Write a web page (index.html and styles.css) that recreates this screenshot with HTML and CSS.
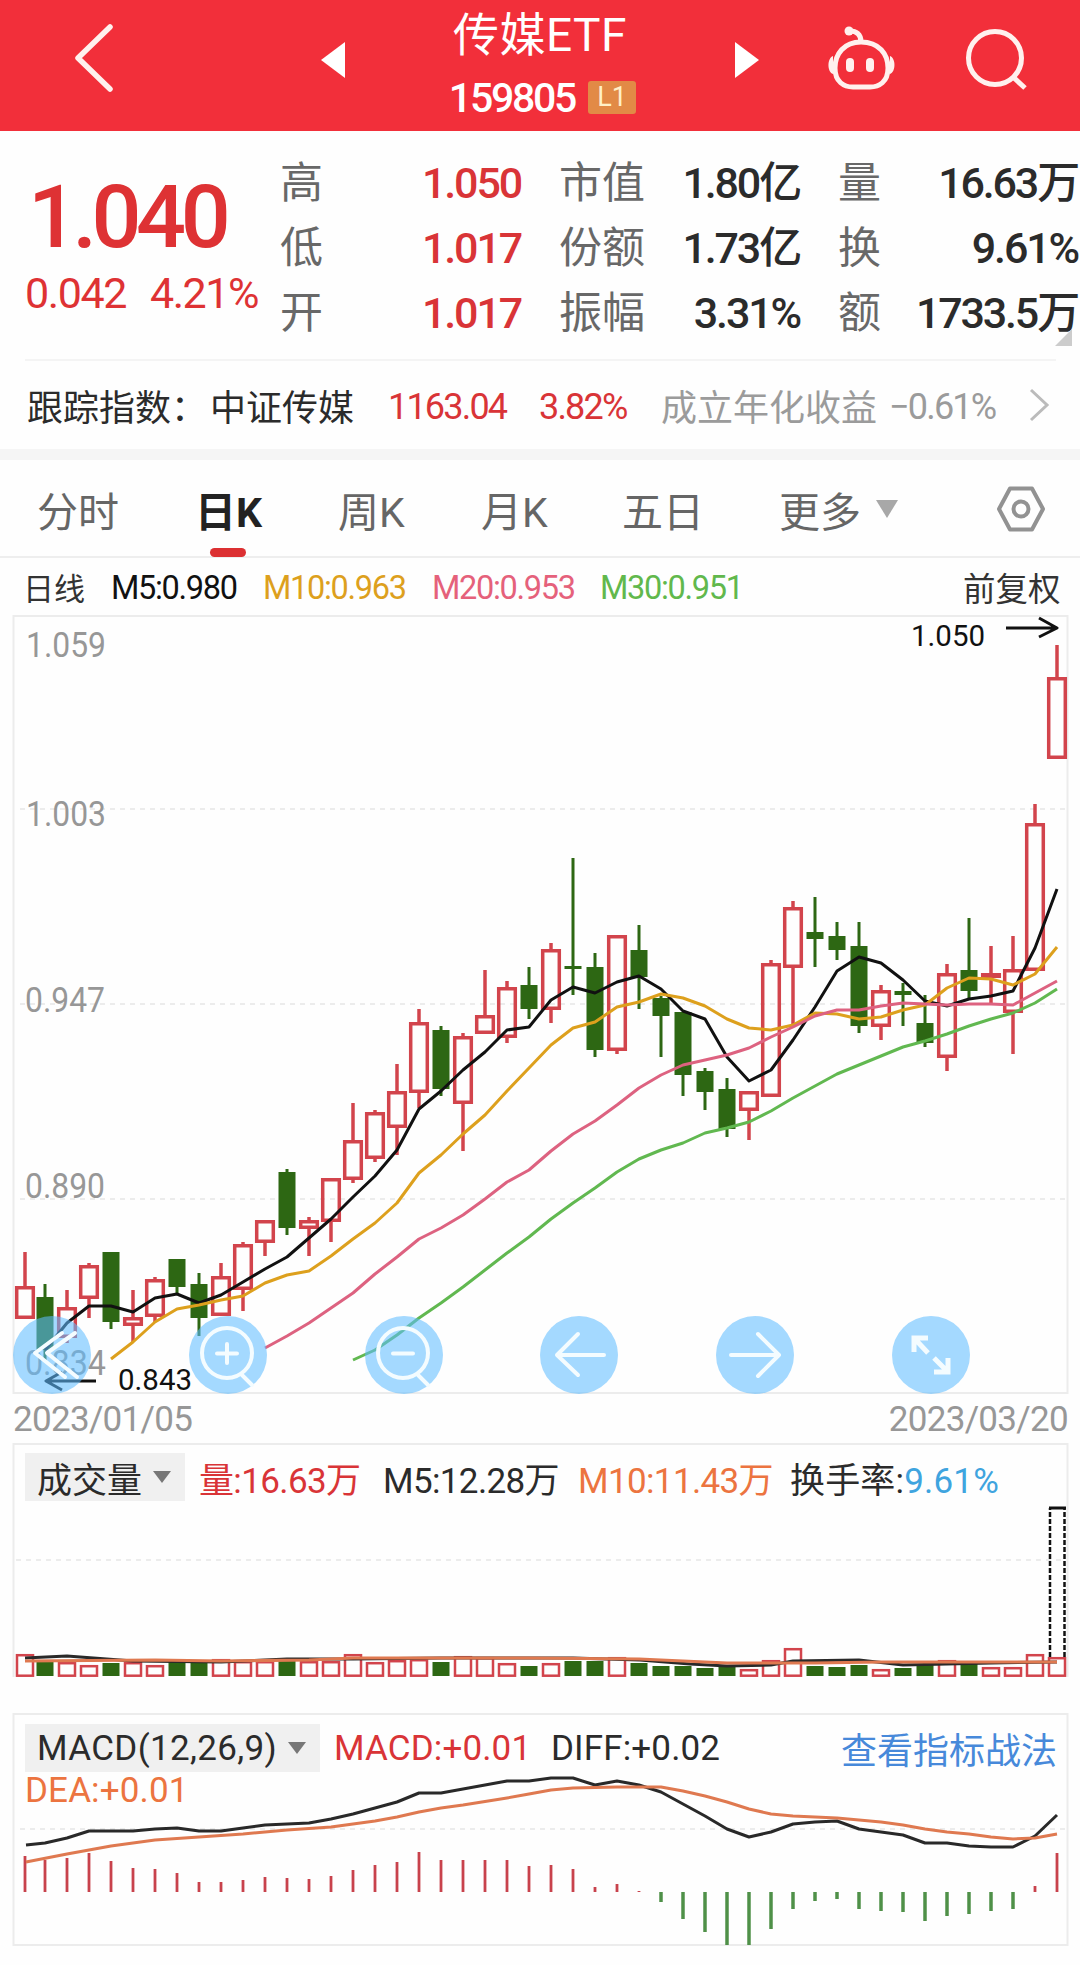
FILE: index.html
```html
<!DOCTYPE html>
<html lang="zh-CN">
<head>
<meta charset="utf-8">
<title>传媒ETF 159805</title>
<link rel="stylesheet" href="styles.css">
</head>
<body>
<header class="topbar">
  <svg class="back" viewBox="0 0 50 70"><path d="M40 4 8 35 40 66"/></svg>
  <svg class="tri prev" viewBox="0 0 24 36"><path d="M0 18 24 0V36Z"/></svg>
  <div class="title">
    <h1>传媒ETF</h1>
    <div class="code"><span class="num">159805</span><span class="badge">L1</span></div>
  </div>
  <svg class="tri next" viewBox="0 0 24 36"><path d="M24 18 0 0V36Z"/></svg>
  <svg class="robot" viewBox="0 0 72 66">
    <path class="line" d="M36 16C54 16 63 28 63 42C63 56 54 61 45 61H28C19 61 10 56 10 42C10 28 19 16 36 16ZM36 16C36 8 31 5 25 5"/>
    <circle cx="24" cy="5" r="4.5"/><rect x="21" y="32" width="8" height="14" rx="4"/><rect x="41" y="32" width="8" height="14" rx="4"/>
    <path d="M8 30C2 32 2 46 8 48ZM65 30C71 32 71 46 65 48Z"/>
  </svg>
  <svg class="search" viewBox="0 0 64 64"><circle cx="30" cy="30" r="26.5"/><path d="M48 49 60 60"/></svg>
</header>

<section class="quote">
  <div class="price">
    <strong>1.040</strong>
    <div class="change"><span>0.042</span><span>4.21%</span></div>
  </div>
  <dl class="stats">
    <dt>高</dt><dd class="up">1.050</dd><dt>市值</dt><dd>1.80亿</dd><dt>量</dt><dd>16.63万</dd>
    <dt>低</dt><dd class="up">1.017</dd><dt>份额</dt><dd>1.73亿</dd><dt>换</dt><dd>9.61%</dd>
    <dt>开</dt><dd class="up">1.017</dd><dt>振幅</dt><dd>3.31%</dd><dt>额</dt><dd>1733.5万</dd>
  </dl>
  <i class="corner"></i>
</section>

<section class="index">
  <span>跟踪指数：</span><span>中证传媒</span><span class="up num">1163.04</span><span class="up num">3.82%</span>
  <span class="muted">成立年化收益</span><span class="muted num">−0.61%</span>
  <svg viewBox="0 0 20 34"><path d="M2 2 18 17 2 32"/></svg>
</section>

<nav class="tabs">
  <a>分时</a><a class="active">日K</a><a>周K</a><a>月K</a><a>五日</a><a>更多<i class="caret"></i></a>
  <svg viewBox="0 0 50 46"><path d="M14 2.5H36L47 23 36 43.5H14L3 23Z"/><circle cx="25" cy="23" r="7.5"/></svg>
</nav>

<div class="averages">
  <span>日线</span><span class="num m5">M5:0.980</span><span class="num m10">M10:0.963</span><span class="num m20">M20:0.953</span><span class="num m30">M30:0.951</span><span class="adjust">前复权</span>
</div>

<section class="kline">
  <svg id="kline" viewBox="0 615 1080 781"></svg>
  <div class="controls">
    <button><svg viewBox="0 0 78 78"><path d="M49 17 22 37 52 61M62 17 34 37 64 61"/></svg></button>
    <button><svg viewBox="0 0 78 78"><circle cx="38" cy="37" r="25"/><path d="M28 37.500H48M38 28V47M53 59 63 69"/></svg></button>
    <button><svg viewBox="0 0 78 78"><circle cx="38" cy="37" r="25"/><path d="M28 37.500H48M53 59 63 69"/></svg></button>
    <button><svg viewBox="0 0 78 78"><path d="M64 39H17M38 18 17 39 38 59"/></svg></button>
    <button><svg viewBox="0 0 78 78"><path d="M15 39H63M42 18 63 39 42 60"/></svg></button>
    <button><svg viewBox="0 0 78 78" class="expand"><path d="M36 37 22 22M22 36V22H36M42 42 56 56M56 42V56H42"/></svg></button>
  </div>
</section>
<div class="dates"><span>2023/01/05</span><span>2023/03/20</span></div>

<section class="panel volume">
  <svg id="volume" viewBox="0 1443 1080 270"></svg>
  <div class="legend">
    <a class="picker">成交量<i class="caret"></i></a>
    <span class="up">量:16.63万</span><span>M5:12.28万</span><span class="orange">M10:11.43万</span><span>换手率:<b>9.61%</b></span>
  </div>
</section>

<section class="panel macd">
  <svg id="macd" viewBox="0 1713 1080 252"></svg>
  <div class="legend">
    <a class="picker">MACD(12,26,9)<i class="caret"></i></a>
    <span class="up">MACD:+0.01</span><span>DIFF:+0.02</span><a class="link">查看指标战法</a>
    <span class="orange dea">DEA:+0.01</span>
  </div>
</section>
<script src="charts.js"></script>
</body>
</html>
```
FILE: styles.css
```css
* { box-sizing: border-box; }
body { margin: 0; width: 1080px; height: 1965px; overflow: hidden; background: #fefefe; color: #2b2b2b; font-family: Roboto, "Noto Sans CJK SC", sans-serif; }
svg { display: block; flex: none; fill: none; overflow: visible; }
.num { letter-spacing: -0.04em; }
.up { color: #d93437; }
.muted { color: #9b9b9b; }
.orange { color: #ec7440; }

.topbar { display: flex; align-items: center; height: 131px; background: #f22f3a; color: #fff; }
.topbar svg { stroke: #fff1ee; }
.topbar .back { width: 50px; height: 70px; margin: -15px 0 0 70px; stroke-width: 5.5; stroke-linecap: round; stroke-linejoin: round; }
.topbar .tri { width: 24px; height: 36px; margin-top: -11px; fill: #fff; stroke: none; }
.topbar .prev { margin-left: 201px; }
.title { width: 390px; display: flex; flex-direction: column; align-items: center; }
.title h1 { margin: -4px 0 0; font-size: 46px; line-height: 68px; font-weight: 400; letter-spacing: 0.5px; }
.code { display: flex; align-items: center; gap: 13px; height: 58px; font-size: 41px; font-weight: 500; line-height: 58px; padding-left: 5px; }
.code .num { letter-spacing: -0.055em; }
.badge { width: 48px; height: 33px; border-radius: 3px; background: #e28a46; color: #fff0c8; font-size: 27px; line-height: 33px; font-weight: 400; text-align: center; }
.topbar .robot { width: 72px; height: 66px; margin: -14px 0 0 66px; fill: #fff1ee; stroke: none; }
.topbar .robot .line { fill: none; stroke: #fff1ee; stroke-width: 5; }
.topbar .search { width: 64px; height: 64px; margin: -11px 0 0 68px; stroke-width: 5; }

.quote { position: relative; display: flex; height: 230px; }
.quote::after { content: ""; position: absolute; left: 25px; right: 24px; bottom: 0; height: 2px; background: #f4f4f4; }
.price { width: 280px; color: #de3234; padding: 32px 0 0 25px; }
.price strong { display: block; font-size: 88px; line-height: 108px; font-weight: 500; letter-spacing: -0.062em; padding-left: 3px; }
.change { display: flex; gap: 24px; font-size: 43px; line-height: 50px; margin-top: -3px; letter-spacing: -0.033em; }
.stats { display: grid; grid-template-columns: 120px 121px 123px 156px 85px 193px; grid-auto-rows: 65px; margin: 20px 0 0; font-size: 43px; line-height: 65px; white-space: nowrap; }
.stats dt { color: #686868; }
.stats dt:nth-of-type(3n+2), .stats dt:nth-of-type(3n) { padding-left: 38px; }
.stats dd { margin: 0; text-align: right; letter-spacing: -0.05em; font-weight: 500; }
.corner { position: absolute; right: 8px; bottom: 15px; border: solid transparent; border-width: 0 0 17px 17px; border-bottom-color: #ccc; }

.index { display: grid; grid-template-columns: 183px 178px 151px 122px 228px 140px 20px; align-items: center; height: 88px; padding: 0 0 0 27px; font-size: 36px; white-space: nowrap; }
.index .num { letter-spacing: -0.05em; padding-top: 3px; }
.index svg { width: 20px; height: 34px; stroke: #bbb; stroke-width: 3; }

.tabs { position: relative; display: grid; grid-template-columns: 158px 143px 143px 141px 157px 216px 50px; align-items: center; height: 109px; border-top: 11px solid #f5f5f5; border-bottom: 2px solid #eee; padding: 1px 0 0 37px; font-size: 41px; color: #666; white-space: nowrap; }
.tabs a { position: relative; display: flex; align-items: center; }
.tabs .active { color: #222; font-weight: 700; }
.tabs .active::after { content: ""; position: absolute; left: 15px; bottom: -18px; width: 36px; height: 9px; border-radius: 5px; background: #dc3032; }
.caret { border: solid transparent; border-width: 18px 11px 0; border-top-color: #a8a8a8; margin-left: 15px; }
.tabs svg { width: 50px; height: 46px; margin-left: 1px; stroke: #929292; stroke-width: 4; stroke-linejoin: round; }

.averages { display: grid; grid-template-columns: 88px 152px 169px 168px 363px auto; align-items: center; height: 57px; padding-left: 23px; font-size: 32.500px; color: #333; white-space: nowrap; }
.averages > :first-child { font-size: 31px; }
.averages .num { padding-top: 2px; }
.m5 { color: #111; } .m10 { color: #dda01d; } .m20 { color: #e5617b; } .m30 { color: #61b84c; }

.kline { position: relative; height: 781px; }
.kline > svg { width: 1080px; height: 781px; }
.controls { position: absolute; left: 13px; bottom: 2px; display: flex; gap: 97.800px; }
.controls button { width: 78px; height: 78px; padding: 0; border: 0; border-radius: 50%; background: rgba(95, 189, 255, .57); }
.controls svg { width: 78px; height: 78px; stroke: #f4fcff; stroke-width: 4; stroke-linecap: round; stroke-linejoin: round; }
.controls .expand { stroke-width: 5; stroke-linecap: butt; stroke-linejoin: miter; }
.dates { display: flex; justify-content: space-between; height: 47px; padding: 0 12px 0 13px; font-size: 35px; line-height: 47px; letter-spacing: -0.02em; color: #979797; }

.panel { display: grid; font-size: 35px; }
.panel > svg, .panel > .legend { grid-area: 1 / 1; }
.panel > svg { width: 1080px; }
.legend { display: grid; align-items: center; align-content: start; padding: 11px 0 0 25px; white-space: nowrap; grid-auto-rows: 48px; }
.volume .legend { grid-template-columns: 174px 184px 195px 212px auto; letter-spacing: -0.018em; padding-top: 10px; }
.volume .legend > :last-child { letter-spacing: 0.005em; }
.macd .legend { grid-template-columns: 309px 217px 290px auto; grid-template-rows: 48px 36px; letter-spacing: 0.004em; }
.legend b { color: #3fa4df; font-weight: 400; }
.picker { display: flex; align-items: center; width: 160px; height: 48px; padding-left: 12px; background: #f0f0f0; letter-spacing: 0; }
.macd .picker { width: 295px; letter-spacing: 0.01em; }
.picker .caret { border-width: 12px 9px 0; border-top-color: #777; margin-left: 11px; }
.link { color: #4789da; letter-spacing: 0; font-size: 36px; }
.dea { grid-column: 1; }

svg text { font-family: Roboto, sans-serif; }
.frame { stroke: #ececec; stroke-width: 2; }
.grid { stroke: #e6e6e6; stroke-width: 1.500; stroke-dasharray: 5 5; }
.axis { fill: #979797; font-size: 35px; }
.mark { fill: #111; font-size: 30px; }
.red { stroke: #d2444c; stroke-width: 3.500; }
.green { stroke: #2d6713; fill: #2d6713; stroke-width: 3; }
.body-green { fill: #2d6713; }
.thin { stroke-width: 2.500; }
.bar-up { stroke: #c8424c; stroke-width: 2.800; }
.bar-down { stroke: #4f9048; stroke-width: 3.500; }
.curve { stroke-width: 3; stroke-linejoin: round; }
.k { stroke: #111; } .y { stroke: #dda01d; } .p { stroke: #dd6280; } .g { stroke: #61b850; } .o { stroke: #df7950; } .d { stroke: #292929; }
.dash { stroke: #111; stroke-width: 2.500; stroke-dasharray: 5 2; }
```
FILE: charts.js
```js
const cx = i => i === 0 ? 25 : 23 + 22 * i;

// [direction, high, body top, body bottom, low]
const candles = [
['r',1252,1286,1319,1319],['g',1284,1297,1350,1362],['r',1290,1307,1338,1343],['r',1263,1265,1299,1318],
['g',1252,1252,1322,1329],['r',1290,1317,1326,1342],['r',1277,1279,1317,1322],['g',1259,1259,1287,1294],
['g',1273,1284,1318,1336],['r',1263,1276,1316,1316],['r',1242,1244,1290,1311],['r',1220,1220,1243,1256],
['g',1169,1172,1228,1235],['r',1217,1220,1229,1256],['r',1178,1178,1222,1242],['r',1103,1140,1180,1183],
['r',1110,1112,1159,1162],['r',1064,1091,1128,1155],['r',1009,1022,1093,1108],['g',1026,1030,1089,1096],
['r',1033,1036,1104,1151],['r',970,1015,1034,1034],['r',981,987,1038,1043],['g',967,985,1009,1019],
['r',943,949,1010,1023],['g',858,966,969,995],['g',953,967,1050,1057],['r',935,935,1051,1054],
['g',925,950,977,1009],['g',996,998,1016,1057],['g',1012,1012,1075,1096],['g',1068,1071,1092,1110],
['g',1078,1089,1129,1137],['r',1091,1091,1111,1140],['r',960,963,1097,1097],['r',901,907,968,1025],
['g',897,932,939,967],['g',922,936,950,960],['g',922,946,1026,1033],['r',985,990,1027,1040],
['g',983,991,995,1026],['g',995,1023,1043,1047],['r',964,973,1058,1071],['g',918,970,991,999],
['r',946,973,978,1004],['r',936,969,1013,1054],['r',804,823,971,971],['r',645,677,759,759]];

const ma5 = [1350,1323,1306,1306,1312,1298,1294,1303,1295,1282,1269,1257,1238,1219,1197,1176,1150,1109,1091,1070,1052,1030,1027,1000,987,993,982,976,989,1011,1019,1057,1081,1070,1040,1007,971,957,963,980,1001,1006,999,996,991,948,889];
const ma10 = [1359,1342,1322,1309,1305,1300,1296,1283,1275,1271,1256,1239,1223,1203,1173,1155,1134,1115,1091,1068,1045,1028,1022,1007,1002,994,998,1006,1019,1028,1030,1025,1013,1014,1019,1017,1010,1005,988,978,979,985,974,947];
const ma20 = [1348,1336,1323,1308,1293,1274,1257,1239,1228,1215,1199,1182,1170,1151,1134,1121,1105,1088,1075,1065,1060,1055,1048,1037,1027,1016,1010,1010,1006,1003,1004,1005,1004,1004,1005,993,981];
const ma30 = [1360,1350,1335,1318,1303,1287,1270,1253,1237,1219,1203,1188,1172,1159,1150,1143,1133,1128,1122,1111,1098,1086,1074,1065,1056,1047,1041,1034,1026,1019,1013,1003,989];

const volumeTops = [1654,1662,1662,1665,1663,1662,1665,1661,1663,1659,1661,1661,1658,1661,1661,1654,1662,1660,1659,1662,1656,1657,1663,1666,1663,1661,1661,1657,1663,1666,1666,1668,1666,1669,1660,1648,1666,1667,1665,1669,1668,1664,1660,1664,1667,1667,1654,1657];
const volumeGreen = new Set([1,4,7,8,12,19,23,25,26,28,29,30,31,32,36,37,38,40,41,43]);
const histogram = [1856,1860,1858,1853,1861,1868,1869,1873,1882,1882,1880,1877,1878,1879,1876,1870,1865,1862,1852,1860,1860,1860,1860,1866,1865,1869,1887,1884,1891,1902,1919,1932,1945,1945,1929,1909,1901,1899,1909,1911,1912,1921,1916,1914,1911,1909,1886,1853];

// A series always ends on the last trading day.
const series = (values, cls) => {
  const start = 48 - values.length;
  return curve(values.map((y, i) => [cx(start + i), y]), cls);
};
const curve = (points, cls) => `<polyline class="curve ${cls}" points="${points.map(p => p.join()).join(' ')}"/>`;
const line = (x1, y1, x2, y2, cls) => `<path class="${cls}" d="M${x1} ${y1}L${x2} ${y2}"/>`;
const rect = (x, y, w, h, cls) => `<rect class="${cls}" x="${x}" y="${y}" width="${w}" height="${h}"/>`;
const label = (x, y, w, text, cls) => `<text class="${cls}" x="${x}" y="${y}" textLength="${w}" lengthAdjust="spacingAndGlyphs">${text}</text>`;

let k = rect(13.5, 616, 1054, 777, 'frame');
[809, 1004, 1199].forEach(y => k += line(20, y, 1066, y, 'grid'));
k += label(26, 657, 80, '1.059', 'axis') + label(26, 826, 80, '1.003', 'axis') + label(25, 1012, 80, '0.947', 'axis') + label(25, 1198, 80, '0.890', 'axis') + label(25, 1375, 81, '0.834', 'axis');
candles.forEach(([type, high, top, bottom, low], i) => {
  const x = cx(i);
  if (type === 'g') {
    k += line(x, high, x, low, 'green') + rect(x - 8.5, top, 17, bottom - top, 'body-green');
  } else {
    k += line(x, high, x, top, 'red') + line(x, bottom, x, low, 'red') + rect(x - 8.3, top + 1.75, 16.6, bottom - top - 3.5, 'red');
  }
});
k += series(ma5, 'k') + series(ma10, 'y') + series(ma20, 'p') + series(ma30, 'g');
k += label(911, 646, 74, '1.050', 'mark') + label(118, 1390, 74, '0.843', 'mark');
k += '<path class="curve k" d="M1006 628H1057M1039 618 1057 628 1039 637M96 1381H46M62 1372 46 1381 62 1390"/>';
document.getElementById('kline').innerHTML = k;

let v = '<path class="frame" d="M13.500 1677V1444H1067.500V1677"/>' + line(16, 1560, 1066, 1560, 'grid');
volumeTops.forEach((top, i) => {
  const x = cx(i);
  v += volumeGreen.has(i) ? rect(x - 8.5, top, 17, 1676 - top, 'body-green') : rect(x - 8, top + 1.2, 16, 1674.5 - top, 'red thin');
});
v += curve([[25,1658],[67,1656],[133,1661],[221,1662],[287,1659],[353,1659],[441,1658],[573,1658],[640,1660],[690,1664],[727,1666],[771,1665],[793,1661],[859,1660],[903,1665],[947,1664],[991,1663],[1057,1662]], 'd');
v += curve([[25,1661],[155,1660],[221,1661],[309,1660],[353,1658],[529,1658],[639,1659],[727,1663],[815,1663],[881,1662],[1057,1662]], 'o');
v += '<path class="dash" d="M1050 1657V1508M1064.5 1657V1508"/>' + line(1049, 1508, 1066, 1508, 'curve k');
document.getElementById('volume').innerHTML = v;

let m = rect(13.5, 1714, 1054, 231, 'frame') + line(20, 1829, 1066, 1829, 'grid');
histogram.forEach((y, i) => m += line(cx(i), y, cx(i), 1892, y < 1892 ? 'bar-up' : 'bar-down thin'));
m += curve([[26,1845],[45,1843],[67,1838],[89,1831],[133,1831],[155,1829],[177,1828],[199,1831],[221,1831],[243,1828],[265,1825],[309,1823],[331,1819],[353,1814],[375,1808],[397,1802],[419,1793],[441,1793],[463,1789],[485,1785],[507,1781],[529,1781],[551,1778],[573,1778],[595,1785],[617,1781],[639,1785],[661,1792],[683,1804],[705,1816],[727,1829],[749,1837],[771,1832],[793,1824],[815,1822],[837,1821],[859,1829],[881,1832],[903,1835],[925,1843],[947,1843],[969,1846],[991,1847],[1013,1847],[1035,1836],[1057,1815]], 'd');
m += curve([[26,1862],[67,1854],[111,1846],[155,1840],[199,1837],[243,1834],[287,1830],[331,1827],[375,1821],[397,1817],[419,1812],[441,1808],[463,1805],[507,1798],[529,1794],[551,1790],[573,1788],[617,1787],[661,1787],[683,1791],[705,1796],[727,1802],[749,1809],[771,1814],[793,1816],[837,1818],[881,1822],[903,1825],[925,1829],[947,1832],[969,1834],[991,1837],[1013,1839],[1035,1838],[1057,1834]], 'o');
document.getElementById('macd').innerHTML = m;
```
